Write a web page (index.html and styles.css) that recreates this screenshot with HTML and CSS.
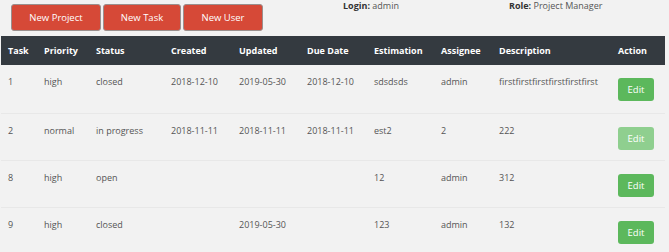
FILE: index.html
```html
<!DOCTYPE html>
<html lang="en">
<head>
    <meta charset="UTF-8">
    <title>Tasks</title>
    <link rel="stylesheet" href="styles.css">
</head>
<body>
    <div class="top-bar">
        <div class="top-buttons">
            <button class="btn-red btn-project">New Project</button>
            <button class="btn-red btn-task">New Task</button>
            <button class="btn-red btn-user">New User</button>
        </div>
        <div class="user-login"><b>Login:</b> admin</div>
        <div class="user-role"><b>Role:</b> Project Manager</div>
    </div>

    <table class="task-table">
        <thead>
            <tr>
                <th class="c-task">Task</th>
                <th class="c-priority">Priority</th>
                <th class="c-status">Status</th>
                <th class="c-date">Created</th>
                <th class="c-date">Updated</th>
                <th class="c-due">Due Date</th>
                <th class="c-est">Estimation</th>
                <th class="c-assignee">Assignee</th>
                <th class="c-desc">Description</th>
                <th class="c-action">Action</th>
            </tr>
        </thead>
        <tbody>
            <tr>
                <td>1</td>
                <td>high</td>
                <td>closed</td>
                <td>2018-12-10</td>
                <td>2019-05-30</td>
                <td>2018-12-10</td>
                <td>sdsdsds</td>
                <td>admin</td>
                <td>firstfirstfirstfirstfirstfirst</td>
                <td><button class="btn-edit">Edit</button></td>
            </tr>
            <tr>
                <td>2</td>
                <td>normal</td>
                <td>in progress</td>
                <td>2018-11-11</td>
                <td>2018-11-11</td>
                <td>2018-11-11</td>
                <td>est2</td>
                <td>2</td>
                <td>222</td>
                <td><button class="btn-edit" disabled>Edit</button></td>
            </tr>
            <tr>
                <td>8</td>
                <td>high</td>
                <td>open</td>
                <td></td>
                <td></td>
                <td></td>
                <td>12</td>
                <td>admin</td>
                <td>312</td>
                <td><button class="btn-edit">Edit</button></td>
            </tr>
            <tr>
                <td>9</td>
                <td>high</td>
                <td>closed</td>
                <td></td>
                <td>2019-05-30</td>
                <td></td>
                <td>123</td>
                <td>admin</td>
                <td>132</td>
                <td><button class="btn-edit">Edit</button></td>
            </tr>
        </tbody>
    </table>
</body>
</html>
```

FILE: styles.css
```css
* {
    margin: 0;
    padding: 0;
    box-sizing: border-box;
    font-family: "Open Sans", "Noto Sans", sans-serif;
}

body {
    background-color: #f2f2f2;
    color: #555;
    font-size: 9px;
}

.top-bar {
    display: flex;
    height: 36px;
}

.top-buttons {
    display: flex;
    gap: 2px;
    padding: 4px 0 0 11px;
    width: 343px;
}

.btn-red {
    height: 27px;
    background-color: #d64937;
    color: white;
    border: 1px solid #9a8f8d;
    border-radius: 3px;
    font-size: 9.5px;
}

.btn-project { width: 90px; }
.btn-task { width: 78px; }
.btn-user { width: 80px; }

.user-login {
    width: 166px;
    line-height: 12px;
}

.user-role {
    line-height: 12px;
}

.user-login b,
.user-role b {
    color: #333;
}

.task-table {
    margin-left: 1px;
    width: 664px;
    border-collapse: collapse;
    table-layout: fixed;
}

.task-table th {
    background-color: #343a40;
    color: white;
    font-weight: bold;
    text-align: left;
    height: 29px;
    padding: 0 7px;
    white-space: nowrap;
}

.task-table td {
    vertical-align: top;
    padding: 10px 7px;
    line-height: 13px;
    height: 47px;
    white-space: nowrap;
    border-top: 1px solid #e8e8e8;
}

.task-table tbody tr:first-child td {
    border-top: none;
    height: 48px;
}

.c-task { width: 36px; }
.c-priority { width: 52px; }
.c-status { width: 75px; }
.c-date { width: 68px; }
.c-due { width: 67px; }
.c-est { width: 67px; }
.c-assignee { width: 58px; }
.c-desc { width: 119px; }
.c-action { width: 54px; }

.btn-edit {
    display: block;
    margin-top: 3px;
    width: 36px;
    height: 23px;
    background-color: #5cb85c;
    color: white;
    border: none;
    border-radius: 3px;
    font-size: 9.5px;
}

.btn-edit:disabled {
    background-color: #8fcf8f;
}
```
